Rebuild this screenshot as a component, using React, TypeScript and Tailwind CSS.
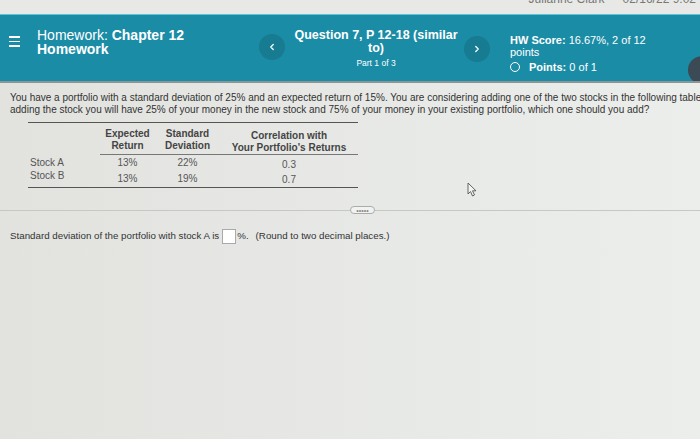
import { ChevronLeft, ChevronRight } from "lucide-react";

const font = { fontFamily: '"Liberation Sans", Arial, sans-serif' };

const rows = [
	{ name: "Stock A", ret: "13%", sd: "22%", corr: "0.3" },
	{ name: "Stock B", ret: "13%", sd: "19%", corr: "0.7" },
];

export default function App() {
	return (
		<div
			className="relative w-[700px] h-[439px] overflow-hidden bg-linear-to-r from-[#e2e3df] to-[#eceeec] text-[#333]"
			style={font}
		>
			{/* top strip, user / date mostly cut off */}
			<div className="h-[14px] overflow-hidden bg-[#e8e9e6]">
				<div className="flex justify-end gap-[18px] pr-[4px] mt-[-9px] text-[12px] leading-[16px] text-[#777]">
					<span>Julianne Clark</span>
					<span>02/16/22 9:02</span>
				</div>
			</div>

			{/* header */}
			<div className="relative h-[69px] flex items-start overflow-hidden bg-[#1b8ca6] border-t border-[#5fc3d6] border-b-2 border-b-[#8a9596] text-white">
				<div className="ml-[9px] mt-[21px] flex flex-col gap-[3px]">
					<div className="w-[11px] h-[1.5px] bg-white" />
					<div className="w-[11px] h-[1.5px] bg-white" />
					<div className="w-[11px] h-[1.5px] bg-white" />
				</div>
				<div className="ml-[17px] mt-[14px] w-[210px] text-[14px] leading-[13.5px]">
					<div>
						Homework: <span className="font-bold">Chapter 12</span>
					</div>
					<div className="font-bold">Homework</div>
				</div>
				<div className="ml-[12px] mt-[19px] w-[26px] h-[26px] rounded-full bg-[#177b91] flex items-center justify-center">
					<ChevronLeft size={10} strokeWidth={3} />
				</div>
				<div className="ml-[3px] mt-[14px] w-[176px] flex flex-col items-center">
					<div className="text-[12.5px] leading-[13px] font-bold text-center">
						Question 7, P 12-18 (similar
						<br />
						to)
					</div>
					<div className="mt-[3px] text-[8.5px] leading-[10px]">Part 1 of 3</div>
				</div>
				<div className="mt-[21px] w-[26px] h-[26px] rounded-full bg-[#177b91] flex items-center justify-center">
					<ChevronRight size={10} strokeWidth={3} />
				</div>
				<div className="ml-[20px] mt-[19px] text-[11px] leading-[12px]">
					<div>
						<span className="font-bold">HW Score:</span> 16.67%, 2 of 12
					</div>
					<div>points</div>
					<div className="mt-[3px] flex items-center">
						<div className="w-[10px] h-[10px] rounded-full border-[1.5px] border-white" />
						<span className="ml-[9px]">
							<span className="font-bold">Points:</span> 0 of 1
						</span>
					</div>
				</div>
				<div className="absolute right-[-16px] top-[41px] w-[28px] h-[28px] rounded-full bg-[#3b4a55]" />
			</div>

			{/* question */}
			<div className="pl-[10px] pt-[9px] text-[10px] leading-[12px] whitespace-nowrap">
				<div>
					You have a portfolio with a standard deviation of 25% and an expected return of 15%. You are considering adding one of the two stocks in the following table. If after
				</div>
				<div>
					adding the stock you will have 25% of your money in the new stock and 75% of your money in your existing portfolio, which one should you add?
				</div>
			</div>

			<table className="ml-[28px] mt-[6px] w-[330px] border-collapse text-[10px] leading-[11px] border-t-[1.5px] border-b-[1.5px] border-[#555]">
				<thead>
					<tr className="font-bold text-[#444] leading-[12px]">
						<th className="w-[72px]" />
						<th className="w-[55px] pt-[4px] pb-[2px] font-bold border-b border-[#777]">
							Expected
							<br />
							Return
						</th>
						<th className="w-[65px] pt-[4px] pb-[2px] font-bold border-b border-[#777]">
							Standard
							<br />
							Deviation
						</th>
						<th className="pt-[7px] pb-[0px] font-bold border-b border-[#777]">
							Correlation with
							<br />
							Your Portfolio's Returns
						</th>
					</tr>
				</thead>
				<tbody className="text-[#555]">
					{rows.map((r, i) => (
						<tr key={r.name}>
							<td className={`pl-[2px] ${i === 0 ? "pt-[0px]" : "pb-[6px]"}`}>{r.name}</td>
							<td className="text-center">{r.ret}</td>
							<td className="text-center">{r.sd}</td>
							<td className={`text-center ${i === 0 ? "pt-[4px]" : "pt-[2px]"}`}>{r.corr}</td>
						</tr>
					))}
				</tbody>
			</table>

			{/* separator */}
			<div className="mt-[18px] flex items-center">
				<div className="w-[350px] h-px bg-[#c6c8c4]" />
				<div className="w-[25px] h-[8px] rounded-full border border-[#a9adaa] bg-[#f2f3f1] flex items-center justify-center text-[7px] leading-[7px] text-[#888]">
					•••••
				</div>
				<div className="flex-1 h-px bg-[#c6c8c4]" />
			</div>

			{/* answer line */}
			<div className="mt-[15px] pl-[10px] flex items-center text-[9.75px] whitespace-nowrap">
				<span>Standard deviation of the portfolio with stock A is</span>
				<span className="ml-[3px] w-[14px] h-[15px] bg-white border border-[#aaa]" />
				<span className="ml-[1px]">%.</span>
				<span className="ml-[7px]">(Round to two decimal places.)</span>
			</div>

			{/* mouse pointer */}
			<svg className="absolute left-[467px] top-[182px]" width="12" height="16" viewBox="0 0 12 16">
				<path d="M1 1 L1 12 L3.5 9.5 L5.5 14 L7.5 13 L5.5 8.8 L9 8.8 Z" fill="#f4f4f4" stroke="#555" strokeWidth="0.9" strokeLinejoin="round" />
			</svg>
		</div>
	);
}
